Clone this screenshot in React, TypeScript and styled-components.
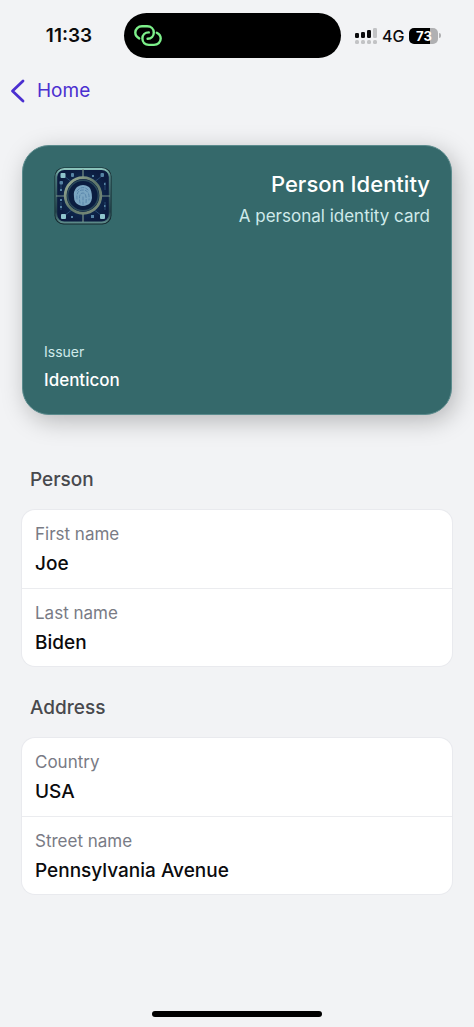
import React from "react";
import styled, { createGlobalStyle } from "styled-components";

const GlobalStyle = createGlobalStyle`
  *, *::before, *::after { box-sizing: border-box; }
  body { margin: 0; background: #f2f3f5; }
`;

const Screen = styled.div`
  display: flex;
  flex-direction: column;
  min-height: 100vh;
  background: #f2f3f5;
  color: #0b0b0d;
  font-family: Inter, "Liberation Sans", sans-serif;
`;

const StatusBar = styled.div`
  display: grid;
  grid-template-columns: 124fr 217fr 133fr;
  align-items: center;
  padding-top: 13px;
`;

const Clock = styled.time`
  padding-left: 14px;
  font-size: 19px;
  line-height: 24px;
  font-weight: 600;
  text-align: center;
  color: #0b0b0d;
`;

const Island = styled.div`
  display: flex;
  align-items: center;
  height: 45px;
  padding: 0 10px;
  border-radius: 23px;
  background: #000;
`;

const Indicators = styled.div`
  display: flex;
  align-items: center;
  gap: 5px;
  padding-left: 14px;
`;

const Network = styled.span`
  font-size: 16px;
  line-height: 20px;
  font-weight: 500;
`;

const Battery = styled.div`
  display: flex;
  align-items: center;
  gap: 1px;

  &::after {
    content: "";
    width: 2px;
    height: 5px;
    border-radius: 0 2px 2px 0;
    background: #b0b0b2;
  }
`;

const BatteryBody = styled.span`
  width: 29px;
  height: 16px;
  border-radius: 5px;
  background: linear-gradient(to right, #000 73%, #b0b0b2 73%);
  color: #fff;
  font-size: 13px;
  line-height: 16px;
  font-weight: 700;
  text-align: center;
`;

const NavBar = styled.nav`
  display: flex;
  padding: 17px 10px 0;
`;

const BackLink = styled.a`
  display: flex;
  align-items: center;
  gap: 11px;
  color: #4b2fd0;
  font-size: 19px;
  line-height: 32px;
  text-decoration: none;
`;

const Content = styled.main`
  display: flex;
  flex-direction: column;
  padding: 38px 22px 40px;
`;

const Card = styled.article`
  display: flex;
  flex-direction: column;
  justify-content: space-between;
  min-height: 270px;
  padding: 21px 21px 20px;
  border: 1px solid #5b8b8d;
  border-radius: 27px;
  background: #35696b;
  box-shadow: 4px 6px 24px rgba(0, 0, 0, 0.25);
`;

const CardHeader = styled.header`
  display: flex;
  justify-content: space-between;
  padding-left: 10px;
`;

const CardHeading = styled.div`
  text-align: right;
`;

const CardTitle = styled.h1`
  margin: 0;
  color: #fff;
  font-size: 22px;
  line-height: 34px;
  font-weight: 500;
`;

const CardSubtitle = styled.p`
  margin: 0;
  color: #cfeaea;
  font-size: 17px;
  line-height: 30px;
`;

const Issuer = styled.dl`
  margin: 0;
`;

const IssuerLabel = styled.dt`
  color: #cfeaea;
  font-size: 14px;
  line-height: 28px;
`;

const IssuerName = styled.dd`
  margin: 0;
  color: #fff;
  font-size: 17px;
  line-height: 28px;
  font-weight: 500;
`;

const Sections = styled.div`
  display: flex;
  flex-direction: column;
  gap: 27px;
  padding-top: 50px;
`;

const SectionTitle = styled.h2`
  margin: 0 0 15px;
  padding-left: 8px;
  color: #48494d;
  font-size: 19px;
  line-height: 30px;
  font-weight: 500;
`;

const FieldList = styled.dl`
  margin: 0;
  border-radius: 13px;
  background: #fff;
  box-shadow: 0 0 0 1px #e9eaee;
`;

const Field = styled.div`
  min-height: 78px;
  padding: 9px 13px 8px;

  & + & {
    border-top: 1px solid #ebecef;
  }
`;

const FieldLabel = styled.dt`
  color: #797b85;
  font-size: 17px;
  line-height: 30px;
`;

const FieldValue = styled.dd`
  margin: 0;
  color: #0b0b0d;
  font-size: 19px;
  line-height: 30px;
  font-weight: 500;
`;

const HomeIndicator = styled.div`
  align-self: center;
  width: 170px;
  height: 6px;
  margin: auto 0 10px;
  border-radius: 3px;
  background: #000;
`;

const LinkedRings = () => (
  <svg width="28" height="24" viewBox="0 0 28 24" fill="none" stroke="#7df08a" strokeWidth="2.4" strokeLinecap="round" aria-hidden="true">
    <path d="M5.2 14.4 C2.8 13.2 1.3 11 1.3 8.6 C1.3 5 4.2 2.3 8 2.3 H13.2 C17 2.3 19.8 5 19.8 8.6 C19.8 12 17.4 14.8 13.6 14.8" />
    <path d="M22.8 8.8 C25.2 10 26.7 12.1 26.7 14.6 C26.7 18.2 23.8 20.9 20 20.9 H14.8 C11 20.9 8.4 18.2 8.4 14.6 C8.4 11 11 8.4 14.8 8.4" />
  </svg>
);

const Signal = () => (
  <svg width="22" height="16" viewBox="0 0 22 16" aria-hidden="true">
    <g fill="#0b0b0d">
      <rect x="0" y="5" width="4" height="5" rx="1.2" />
      <rect x="6" y="4" width="4" height="6" rx="1.2" />
      <rect x="12" y="2" width="4" height="8" rx="1.2" />
    </g>
    <g fill="#c2c3c5">
      <rect x="18" y="0" width="4" height="10" rx="1.2" />
      <rect x="0" y="12" width="4" height="4" rx="1.5" />
      <rect x="6" y="12" width="4" height="4" rx="1.5" />
      <rect x="12" y="12" width="4" height="4" rx="1.5" />
      <rect x="18" y="12" width="4" height="4" rx="1.5" />
    </g>
  </svg>
);

const BackChevron = () => (
  <svg width="16" height="24" viewBox="0 0 16 24" fill="none" stroke="currentColor" strokeWidth="2.8" strokeLinecap="round" strokeLinejoin="round" aria-hidden="true">
    <path d="M13 2 L2.5 12 L13 22" />
  </svg>
);

const FingerprintBadge = () => (
  <svg width="58" height="58" viewBox="0 0 58 58" fill="none" role="img" aria-label="Identicon">
    <defs>
      <linearGradient id="frame" x1="0" y1="0" x2="0" y2="1">
        <stop offset="0" stopColor="#8cc4bb" />
        <stop offset="0.15" stopColor="#4c7b7c" />
        <stop offset="0.8" stopColor="#22404a" />
        <stop offset="1" stopColor="#5c8a89" />
      </linearGradient>
      <radialGradient id="panel">
        <stop offset="0" stopColor="#123c63" />
        <stop offset="1" stopColor="#0c1c40" />
      </radialGradient>
      <linearGradient id="ring" x1="0" y1="0" x2="1" y2="1">
        <stop offset="0" stopColor="#a3b49a" />
        <stop offset="0.5" stopColor="#5d756a" />
        <stop offset="1" stopColor="#81917b" />
      </linearGradient>
    </defs>
    <rect x="0.5" y="0.5" width="57" height="57" rx="9" fill="#14282f" />
    <rect x="2.2" y="2" width="53.6" height="53.6" rx="8" fill="url(#panel)" stroke="url(#frame)" strokeWidth="2" />
    <path d="M29 2V11 M29 47V55 M2 29H11 M47 29H56" stroke="#789389" strokeWidth="1.2" />
    <path d="M10 9L19 16 M48 9L39 16 M10 49L19 42 M48 49L39 42 M7 15V23 M51 15V23 M7 35V43 M51 35V43" stroke="#2d537a" strokeWidth="0.8" />
    <g fill="#8fc4cc">
      <rect x="6.5" y="6" width="5" height="5" rx="1" />
      <rect x="7" y="47" width="5" height="5" rx="1" />
      <rect x="46" y="47" width="5" height="5" rx="1" />
    </g>
    <g fill="#5583a3">
      <rect x="46.5" y="6" width="3.5" height="4" rx="1" />
      <rect x="17" y="6" width="3" height="4" rx="1" />
      <rect x="5.5" y="14" width="3.5" height="3.5" rx="1" />
      <rect x="6" y="22" width="2" height="2" />
      <rect x="6" y="32" width="2" height="2" />
      <rect x="6" y="39" width="2" height="2" />
      <rect x="17" y="49" width="2" height="2" />
      <rect x="37" y="48" width="3" height="3" />
      <rect x="50" y="16" width="1.5" height="2" />
      <rect x="50" y="38" width="1.5" height="2" />
      <rect x="38" y="8" width="2" height="2" />
    </g>
    <circle cx="29" cy="28.5" r="17.8" fill="#0b1d40" stroke="url(#ring)" strokeWidth="2.8" />
    <circle cx="29" cy="28.5" r="15.3" stroke="#29495a" strokeWidth="1.4" />
    <path d="M23 20 Q29 16 35 20 Q38 23 38 31 Q37 37 33 38 Q29 40 25 38 Q20 36 20 30 Q19 24 23 20Z" fill="#7ba6c2" />
    <g stroke="#4877a0" strokeWidth="0.7" strokeLinecap="round" strokeDasharray="3 2">
      <path d="M23 24 Q29 17 35 24" />
      <path d="M23 32 Q22 23 29 23 Q36 23 35 33" />
      <path d="M26 36 Q24 26 29 26 Q33 26 32 36" />
      <path d="M29 30V38" />
    </g>
  </svg>
);

const sections = [
  {
    title: "Person",
    fields: [
      { label: "First name", value: "Joe" },
      { label: "Last name", value: "Biden" },
    ],
  },
  {
    title: "Address",
    fields: [
      { label: "Country", value: "USA" },
      { label: "Street name", value: "Pennsylvania Avenue" },
    ],
  },
];

export default function App() {
  return (
    <Screen>
      <GlobalStyle />
      <StatusBar>
        <Clock>11:33</Clock>
        <Island>
          <LinkedRings />
        </Island>
        <Indicators>
          <Signal />
          <Network>4G</Network>
          <Battery>
            <BatteryBody>73</BatteryBody>
          </Battery>
        </Indicators>
      </StatusBar>
      <NavBar>
        <BackLink href="#home">
          <BackChevron />
          Home
        </BackLink>
      </NavBar>
      <Content>
        <Card>
          <CardHeader>
            <FingerprintBadge />
            <CardHeading>
              <CardTitle>Person Identity</CardTitle>
              <CardSubtitle>A personal identity card</CardSubtitle>
            </CardHeading>
          </CardHeader>
          <Issuer>
            <IssuerLabel>Issuer</IssuerLabel>
            <IssuerName>Identicon</IssuerName>
          </Issuer>
        </Card>
        <Sections>
          {sections.map((section) => (
            <section key={section.title}>
              <SectionTitle>{section.title}</SectionTitle>
              <FieldList>
                {section.fields.map((field) => (
                  <Field key={field.label}>
                    <FieldLabel>{field.label}</FieldLabel>
                    <FieldValue>{field.value}</FieldValue>
                  </Field>
                ))}
              </FieldList>
            </section>
          ))}
        </Sections>
      </Content>
      <HomeIndicator />
    </Screen>
  );
}
